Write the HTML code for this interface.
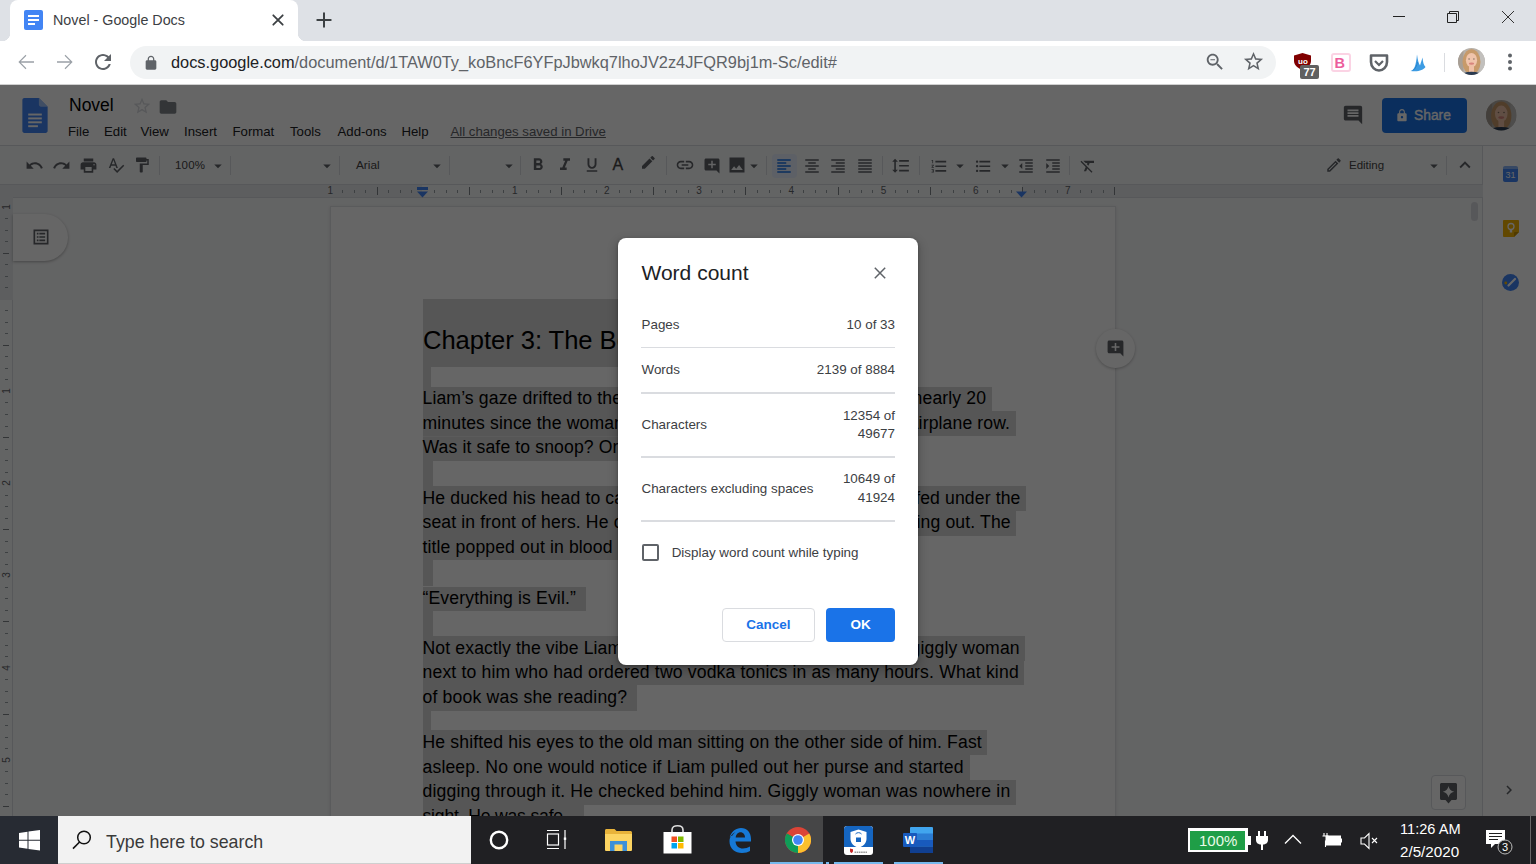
<!DOCTYPE html>
<html><head><meta charset="utf-8">
<style>
*{box-sizing:border-box}
html,body{margin:0;padding:0}
body{width:1536px;height:864px;overflow:hidden;position:relative;font-family:"Liberation Sans",sans-serif;background:#fff}
.a{position:absolute}
svg{display:block}
.t{white-space:nowrap;position:absolute;line-height:1}
</style></head><body>
<!-- ============ CHROME TAB STRIP ============ -->
<div class="a" style="left:0;top:0;width:1536px;height:41px;background:#dee1e6"></div>
<div class="a" style="left:10px;top:0;width:288px;height:41px;background:#fff;border-radius:8px 8px 0 0"></div>
<div class="a" style="left:2px;top:33px;width:8px;height:8px;background:radial-gradient(circle at 0 0,#dee1e6 8px,#fff 8.5px)"></div>
<div class="a" style="left:298px;top:33px;width:8px;height:8px;background:radial-gradient(circle at 100% 0,#dee1e6 8px,#fff 8.5px)"></div>
<!-- docs favicon -->
<div class="a" style="left:24px;top:10px;width:19px;height:20px;background:#4285f4;border-radius:2px"></div>
<div class="a" style="left:28px;top:15px;width:11px;height:2px;background:#fff"></div>
<div class="a" style="left:28px;top:19px;width:11px;height:2px;background:#fff"></div>
<div class="a" style="left:28px;top:23px;width:7px;height:2px;background:#fff"></div>
<div class="t" style="left:53px;top:13px;font-size:14.3px;color:#3c4043">Novel - Google Docs</div>
<svg class="a" style="left:271.3px;top:13px" width="14" height="14" viewBox="0 0 14 14"><path d="M2.3 2.3L11.7 11.7M11.7 2.3L2.3 11.7" stroke="#3c4043" stroke-width="1.8" stroke-linecap="round"/></svg>
<svg class="a" style="left:316px;top:12px" width="16" height="16" viewBox="0 0 16 16"><path d="M8 1.3V14.7M1.3 8H14.7" stroke="#3c4043" stroke-width="2" stroke-linecap="round"/></svg>
<!-- window controls -->
<div class="a" style="left:1393px;top:16px;width:12px;height:1px;background:#222"></div>
<svg class="a" style="left:1446px;top:10px" width="14" height="14" viewBox="0 0 14 14"><path d="M1.5 3.5H10.5V12.5H1.5Z M3.5 3.5V1.5H12.5V10.5H10.5" fill="none" stroke="#222" stroke-width="1"/></svg>
<svg class="a" style="left:1501px;top:10px" width="14" height="14" viewBox="0 0 14 14"><path d="M1 1L13 13M13 1L1 13" stroke="#333" stroke-width="1"/></svg>
<!-- ============ CHROME TOOLBAR ============ -->
<div class="a" style="left:0;top:41px;width:1536px;height:44px;background:#fff"></div>
<div class="a" style="left:0;top:84px;width:1536px;height:1px;background:#d0d0d0"></div>
<svg class="a" style="left:14px;top:49.75px" width="24" height="24" viewBox="0 0 24 24"><path fill="#9aa0a6" d="M20 11.25H6.8l5.6-5.6L11.6 4.8 4.4 12l7.2 7.2.8-.85-5.6-5.6H20z"/></svg>
<svg class="a" style="left:53px;top:49.75px" width="24" height="24" viewBox="0 0 24 24"><path fill="#9aa0a6" d="M4 11.25H17.2l-5.6-5.6.8-.85L19.6 12l-7.2 7.2-.8-.85 5.6-5.6H4z"/></svg>
<svg class="a" style="left:91px;top:50px" width="24" height="24" viewBox="0 0 24 24"><path fill="#5f6368" d="M17.65 6.35C16.2 4.9 14.21 4 12 4c-4.42 0-7.99 3.58-7.99 8s3.57 8 7.99 8c3.73 0 6.84-2.55 7.73-6h-2.08c-.82 2.33-3.04 4-5.65 4-3.31 0-6-2.69-6-6s2.69-6 6-6c1.66 0 3.14.69 4.22 1.78L13 11h7V4l-2.35 2.35z"/></svg>
<div class="a" style="left:130px;top:46px;width:1146px;height:33px;background:#f1f3f4;border-radius:17px"></div>
<svg class="a" style="left:143px;top:55px" width="16" height="16" viewBox="0 0 24 24"><path fill="#5f6368" d="M18 8h-1V6c0-2.76-2.24-5-5-5S7 3.24 7 6v2H6c-1.1 0-2 .9-2 2v10c0 1.1.9 2 2 2h12c1.1 0 2-.9 2-2V10c0-1.1-.9-2-2-2zM15.1 8H8.9V6c0-1.71 1.39-3.1 3.1-3.1 1.71 0 3.1 1.39 3.1 3.1v2z"/></svg>
<div class="t" style="left:171px;top:54px;font-size:16.35px;color:#202124">docs.google.com<span style="color:#5f6368">/document/d/1TAW0Ty_koBncF6YFpJbwkq7lhoJV2z4JFQR9bj1m-Sc/edit#</span></div>
<svg class="a" style="left:1204px;top:51px" width="22" height="22" viewBox="0 0 24 24"><path fill="#5f6368" d="M15.5 14h-.79l-.28-.27C15.41 12.59 16 11.11 16 9.5 16 5.91 13.09 3 9.5 3S3 5.91 3 9.5 5.91 16 9.5 16c1.61 0 3.09-.59 4.23-1.57l.27.28v.79l5 4.99L20.49 19l-4.99-5zm-6 0C7.01 14 5 11.99 5 9.5S7.01 5 9.5 5 14 7.01 14 9.5 11.99 14 9.5 14zM7 9h5v1H7z"/></svg>
<svg class="a" style="left:1242px;top:50px" width="23" height="23" viewBox="0 0 24 24"><path fill="#5f6368" d="M22 9.24l-7.19-.62L12 2 9.19 8.63 2 9.24l5.46 4.73L5.82 21 12 17.27 18.18 21l-1.63-7.03L22 9.24zM12 15.4l-3.76 2.27 1-4.28-3.32-2.88 4.38-.38L12 6.1l1.71 4.04 4.38.38-3.32 2.88 1 4.28L12 15.4z"/></svg>
<!-- extensions -->
<svg class="a" style="left:1293px;top:53px" width="19" height="17" viewBox="0 0 19 17"><path d="M9.5 0L18 2.5V8C18 12 14 15.5 9.5 17C5 15.5 1 12 1 8V2.5Z" fill="#800000"/><text x="5" y="11" font-size="8" fill="#fff" font-family="Liberation Sans" font-weight="bold">uo</text></svg>
<div class="a" style="left:1300px;top:65px;width:19px;height:14px;background:#616161;border-radius:2px;color:#fff;font-size:11px;font-weight:bold;line-height:14px;text-align:center">77</div>
<div class="a" style="left:1331px;top:53px;width:19.5px;height:19px;border:2.5px solid #fbd3e4;border-radius:3px;background:#fff"></div>
<div class="t" style="left:1334.5px;top:56px;font-size:14.5px;font-weight:bold;color:#ec5d9c">B</div>
<svg class="a" style="left:1369px;top:54px" width="20" height="18" viewBox="0 0 20 18"><path d="M2 1.5H18V8C18 13 14 16.5 10 16.5S2 13 2 8Z" fill="none" stroke="#5f6368" stroke-width="2.6" stroke-linejoin="round"/><path d="M6 7L10 11L14 7" fill="none" stroke="#5f6368" stroke-width="2.2"/></svg>
<svg class="a" style="left:1409.5px;top:54px" width="16" height="18" viewBox="0 0 16 18"><path d="M0.5 17C4 16.5 6 12 7 0.5C7.8 6 8.5 9 10 11.5C11 8 12 5.5 12.5 3.5C13 8 13.5 11 15.5 13C13 16 9 18 0.5 17Z" fill="#3d9ce3"/><path d="M3 16.5C6 14 7 11 7.5 8" stroke="#1f7fc9" stroke-width=".8" fill="none"/></svg>
<div class="a" style="left:1444px;top:53px;width:1px;height:19px;background:#dadce0"></div>
<svg class="a" style="left:1458.4px;top:48.4px" width="27" height="27" viewBox="0 0 30 30"><defs><clipPath id="avc"><circle cx="15" cy="15" r="15"/></clipPath></defs><g clip-path="url(#avc)"><rect width="30" height="30" fill="#b7b1aa"/><rect x="0" y="0" width="6" height="30" fill="#a89f95"/><rect x="24" y="0" width="6" height="30" fill="#c2c0bd"/><ellipse cx="15" cy="15.5" rx="10" ry="14" fill="#c79a6a"/><ellipse cx="15" cy="13.5" rx="6.2" ry="8" fill="#f0c4ab"/><rect x="12.2" y="19" width="5.6" height="8" fill="#efc0a6"/><ellipse cx="15" cy="31" rx="12" ry="4.5" fill="#2a3a50"/><ellipse cx="15" cy="17.3" rx="3" ry="1.3" fill="#d8857c"/><circle cx="12.3" cy="12.3" r=".8" fill="#7a6a5a"/><circle cx="17.7" cy="12.3" r=".8" fill="#7a6a5a"/></g></svg>
<svg class="a" style="left:1500px;top:50px" width="20" height="24" viewBox="0 0 20 24"><circle cx="10" cy="5.5" r="2" fill="#5f6368"/><circle cx="10" cy="12" r="2" fill="#5f6368"/><circle cx="10" cy="18.5" r="2" fill="#5f6368"/></svg>
<div class="a" style="left:0;top:85px;width:1536px;height:731px;background:#f8f9fa"></div>
<div class="a" style="left:0;top:85px;width:1536px;height:61px;background:#fff;border-bottom:1px solid #dadce0"></div>
<svg class="a" style="left:22px;top:98px" width="26" height="35" viewBox="0 0 26 36"><path d="M2 0H17L26 9V34C26 35 25 36 24 36H2C1 36 0 35 0 34V2C0 1 1 0 2 0Z" fill="#4285f4"/><path d="M17 0L26 9H19C18 9 17 8 17 7Z" fill="#a1c2fa"/><rect x="6" y="16" width="14" height="2" fill="#fff"/><rect x="6" y="20" width="14" height="2" fill="#fff"/><rect x="6" y="24" width="14" height="2" fill="#fff"/><rect x="6" y="28" width="10" height="2" fill="#fff"/></svg>
<div class="t" style="left:69px;top:97.3px;font-size:17.5px;color:#000">Novel</div>
<svg class="a" style="left:132px;top:96px" width="20" height="20" viewBox="0 0 24 24"><path fill="#dadce0" d="M22 9.24l-7.19-.62L12 2 9.19 8.63 2 9.24l5.46 4.73L5.82 21 12 17.27 18.18 21l-1.63-7.03L22 9.24zM12 15.4l-3.76 2.27 1-4.28-3.32-2.88 4.38-.38L12 6.1l1.71 4.04 4.38.38-3.32 2.88 1 4.28L12 15.4z"/></svg>
<svg class="a" style="left:158px;top:97px" width="20" height="20" viewBox="0 0 24 24"><path fill="#80868b" d="M10 4H4c-1.1 0-1.99.9-1.99 2L2 18c0 1.1.9 2 2 2h16c1.1 0 2-.9 2-2V8c0-1.1-.9-2-2-2h-8l-2-2z"/></svg>
<div class="t" style="left:68px;top:125px;font-size:13.2px;color:#202124">File</div>
<div class="t" style="left:104px;top:125px;font-size:13.2px;color:#202124">Edit</div>
<div class="t" style="left:140.5px;top:125px;font-size:13.2px;color:#202124">View</div>
<div class="t" style="left:184px;top:125px;font-size:13.2px;color:#202124">Insert</div>
<div class="t" style="left:232.5px;top:125px;font-size:13.2px;color:#202124">Format</div>
<div class="t" style="left:290px;top:125px;font-size:13.2px;color:#202124">Tools</div>
<div class="t" style="left:337.5px;top:125px;font-size:13.2px;color:#202124">Add-ons</div>
<div class="t" style="left:401.5px;top:125px;font-size:13.2px;color:#202124">Help</div>
<div class="t" style="left:450.5px;top:125px;font-size:13.2px;color:#5f6368;text-decoration:underline">All changes saved in Drive</div>
<svg class="a" style="left:1342px;top:104px" width="22" height="22" viewBox="0 0 24 24"><path fill="#5f6368" d="M21.99 4c0-1.1-.89-2-1.99-2H4c-1.1 0-2 .9-2 2v12c0 1.1.9 2 2 2h14l4 4-.01-18zM18 14H6v-2h12v2zm0-3H6V9h12v2zm0-3H6V6h12v2z"/></svg>
<div class="a" style="left:1382px;top:98px;width:85px;height:35px;background:#1a73e8;border-radius:4px"></div>
<svg class="a" style="left:1395px;top:108px" width="14" height="15" viewBox="0 0 24 24"><path fill="#fff" d="M18 8h-1V6c0-2.76-2.24-5-5-5S7 3.24 7 6v2H6c-1.1 0-2 .9-2 2v10c0 1.1.9 2 2 2h12c1.1 0 2-.9 2-2V10c0-1.1-.9-2-2-2zm-6 9c-1.1 0-2-.9-2-2s.9-2 2-2 2 .9 2 2-.9 2-2 2zm3.1-9H8.9V6c0-1.71 1.39-3.1 3.1-3.1 1.71 0 3.1 1.39 3.1 3.1v2z"/></svg>
<div class="t" style="left:1414px;top:109px;font-size:13.8px;color:#fff;-webkit-text-stroke:0.35px #fff">Share</div>
<svg class="a" style="left:1486.4px;top:100.2px" width="30.5" height="30.5" viewBox="0 0 30 30"><defs><clipPath id="avd"><circle cx="15" cy="15" r="15"/></clipPath></defs><g clip-path="url(#avd)"><rect width="30" height="30" fill="#b7b1aa"/><rect x="0" y="0" width="6" height="30" fill="#a89f95"/><rect x="24" y="0" width="6" height="30" fill="#c2c0bd"/><ellipse cx="15" cy="15.5" rx="10" ry="14" fill="#c79a6a"/><ellipse cx="15" cy="13.5" rx="6.2" ry="8" fill="#f0c4ab"/><rect x="12.2" y="19" width="5.6" height="8" fill="#efc0a6"/><ellipse cx="15" cy="31" rx="12" ry="4.5" fill="#2a3a50"/><ellipse cx="15" cy="17.3" rx="3" ry="1.3" fill="#d8857c"/><circle cx="12.3" cy="12.3" r=".8" fill="#7a6a5a"/><circle cx="17.7" cy="12.3" r=".8" fill="#7a6a5a"/></g></svg>
<svg class="a" style="left:24.50px;top:155.50px" width="19" height="19" viewBox="0 0 24 24"><path fill="#5f6368" d="M12.5 8c-2.65 0-5.05.99-6.9 2.6L2 7v9h9l-3.62-3.62c1.39-1.16 3.16-1.88 5.12-1.88 3.54 0 6.55 2.31 7.6 5.5l2.37-.78C21.08 11.03 17.15 8 12.5 8z"/></svg>
<svg class="a" style="left:52.10px;top:155.50px" width="19" height="19" viewBox="0 0 24 24"><path fill="#5f6368" d="M18.4 10.6C16.55 8.99 14.15 8 11.5 8c-4.65 0-8.58 3.03-9.96 7.22L3.9 16c1.05-3.19 4.050-5.5 7.6-5.5 1.95 0 3.73.72 5.12 1.88L13 16h9V7l-3.6 3.6z"/></svg>
<svg class="a" style="left:78.50px;top:155.50px" width="19" height="19" viewBox="0 0 24 24"><path fill="#5f6368" d="M19 8H5c-1.66 0-3 1.34-3 3v6h4v4h12v-4h4v-6c0-1.66-1.34-3-3-3zm-3 11H8v-5h8v5zm3-7c-.55 0-1-.45-1-1s.45-1 1-1 1 .45 1 1-.45 1-1 1zm-1-9H6v4h12V3z"/></svg>
<svg class="a" style="left:106.50px;top:156.00px" width="18" height="18" viewBox="0 0 24 24"><path fill="#5f6368" d="M12.45 16h2.09L9.43 3H7.57L2.46 16h2.09l1.12-3h5.64l1.14 3zm-6.02-5L8.5 5.48 10.57 11H6.43zm15.16.59l-8.09 8.09L9.83 16l-1.41 1.41 5.09 5.09L23 13l-1.41-1.41z"/></svg>
<svg class="a" style="left:133.00px;top:156.00px" width="18" height="18" viewBox="0 0 24 24"><path fill="#5f6368" d="M18 4V3c0-.55-.45-1-1-1H5c-.55 0-1 .45-1 1v4c0 .55.45 1 1 1h12c.55 0 1-.45 1-1V6h1v4H9v11c0 .55.45 1 1 1h2c.55 0 1-.45 1-1v-9h8V4h-3z"/></svg>
<div class="a" style="left:158.5px;top:156px;width:1px;height:19px;background:#dadce0"></div>
<div class="t" style="left:175px;top:160px;font-size:11.5px;color:#444;letter-spacing:.2px">100%</div>
<svg class="a" style="left:209.30px;top:157.00px" width="18" height="18" viewBox="0 0 24 24"><path fill="#5f6368" d="M7 10l5 5 5-5z"/></svg>
<div class="a" style="left:229.5px;top:156px;width:1px;height:19px;background:#dadce0"></div>
<svg class="a" style="left:318.00px;top:157.00px" width="18" height="18" viewBox="0 0 24 24"><path fill="#5f6368" d="M7 10l5 5 5-5z"/></svg>
<div class="a" style="left:338.5px;top:156px;width:1px;height:19px;background:#dadce0"></div>
<div class="t" style="left:356px;top:160px;font-size:11.8px;color:#444">Arial</div>
<svg class="a" style="left:427.60px;top:157.00px" width="18" height="18" viewBox="0 0 24 24"><path fill="#5f6368" d="M7 10l5 5 5-5z"/></svg>
<div class="a" style="left:448.5px;top:156px;width:1px;height:19px;background:#dadce0"></div>
<svg class="a" style="left:499.50px;top:157.00px" width="18" height="18" viewBox="0 0 24 24"><path fill="#5f6368" d="M7 10l5 5 5-5z"/></svg>
<div class="a" style="left:519.5px;top:156px;width:1px;height:19px;background:#dadce0"></div>
<svg class="a" style="left:527.50px;top:155.00px" width="20" height="20" viewBox="0 0 24 24"><path fill="#5f6368" d="M15.6 10.79c.97-.67 1.65-1.77 1.65-2.79 0-2.26-1.75-4-4-4H7v14h7.04c2.09 0 3.71-1.7 3.71-3.79 0-1.52-.86-2.82-2.15-3.42zM10 6.5h3c.83 0 1.5.67 1.5 1.5s-.67 1.5-1.5 1.5h-3v-3zm3.5 9H10v-3h3.5c.83 0 1.5.67 1.5 1.5s-.67 1.5-1.5 1.5z"/></svg>
<svg class="a" style="left:554.70px;top:155.00px" width="20" height="20" viewBox="0 0 24 24"><path fill="#5f6368" d="M10 4v3h2.21l-3.42 8H6v3h8v-3h-2.21l3.42-8H18V4z"/></svg>
<svg class="a" style="left:583.00px;top:156.00px" width="18" height="18" viewBox="0 0 24 24"><path fill="#5f6368" d="M12 17c3.31 0 6-2.69 6-6V3h-2.5v8c0 1.930-1.57 3.5-3.5 3.5S8.5 12.93 8.5 11V3H6v8c0 3.31 2.69 6 6 6zm-7 2v2h14v-2H5z"/></svg>
<div class="t" style="left:612.5px;top:157px;font-size:16px;color:#444;-webkit-text-stroke:.3px #444">A</div>
<svg class="a" style="left:639.00px;top:156.00px" width="18" height="18" viewBox="0 0 24 24"><path fill="#5f6368" d="M17.75 7L14 3.25l-10 10V17h3.75l10-10zm2.96-2.96c.39-.39.39-1.02 0-1.41L18.37.29c-.39-.39-1.02-.39-1.41 0L15 2.25 18.75 6l1.96-1.96z"/></svg>
<div class="a" style="left:665.5px;top:156px;width:1px;height:19px;background:#dadce0"></div>
<svg class="a" style="left:674.60px;top:155.00px" width="20" height="20" viewBox="0 0 24 24"><path fill="#5f6368" d="M3.9 12c0-1.71 1.39-3.1 3.1-3.1h4V7H7c-2.76 0-5 2.24-5 5s2.24 5 5 5h4v-1.9H7c-1.71 0-3.1-1.39-3.1-3.1zM8 13h8v-2H8v2zm9-6h-4v1.9h4c1.71 0 3.1 1.39 3.1 3.1s-1.39 3.1-3.1 3.1h-4V17h4c2.76 0 5-2.24 5-5s-2.24-5-5-5z"/></svg>
<svg class="a" style="left:702.70px;top:157.30px" width="18" height="18" viewBox="0 0 24 24"><path fill="#5f6368" d="M22 4c0-1.1-.9-2-2-2H4c-1.1 0-1.99.9-1.99 2L2 16c0 1.1.9 2 2 2h14l4 4-.01-18zM17 11h-4v4h-2v-4H7V9h4V5h2v4h4v2z"/></svg>
<svg class="a" style="left:727.30px;top:155.20px" width="20" height="20" viewBox="0 0 24 24"><path fill="#5f6368" d="M3 3H21V21H3ZM5 18H19L14.5 12L11 16.5L8.5 13.5Z"/></svg>
<svg class="a" style="left:744.60px;top:157.00px" width="18" height="18" viewBox="0 0 24 24"><path fill="#5f6368" d="M7 10l5 5 5-5z"/></svg>
<div class="a" style="left:765.5px;top:156px;width:1px;height:19px;background:#dadce0"></div>
<div class="a" style="left:772px;top:153.5px;width:25px;height:24.5px;background:#e8f0fe;border-radius:4px"></div>
<svg class="a" style="left:775.40px;top:157.00px" width="18" height="18" viewBox="0 0 24 24"><path fill="#1a73e8" d="M15 15H3v2h12v-2zm0-8H3v2h12V7zM3 13h18v-2H3v2zm0 8h18v-2H3v2zM3 3v2h18V3H3z"/></svg>
<svg class="a" style="left:802.50px;top:157.00px" width="18" height="18" viewBox="0 0 24 24"><path fill="#5f6368" d="M7 15v2h10v-2H7zm-4 6h18v-2H3v2zm0-8h18v-2H3v2zm4-6v2h10V7H7zM3 3v2h18V3H3z"/></svg>
<svg class="a" style="left:829.00px;top:157.00px" width="18" height="18" viewBox="0 0 24 24"><path fill="#5f6368" d="M3 21h18v-2H3v2zm6-4h12v-2H9v2zm-6-4h18v-2H3v2zm6-4h12V7H9v2zM3 3v2h18V3H3z"/></svg>
<svg class="a" style="left:855.80px;top:157.00px" width="18" height="18" viewBox="0 0 24 24"><path fill="#5f6368" d="M3 21h18v-2H3v2zm0-4h18v-2H3v2zm0-4h18v-2H3v2zm0-4h18V7H3v2zm0-6v2h18V3H3z"/></svg>
<div class="a" style="left:881.5px;top:156px;width:1px;height:19px;background:#dadce0"></div>
<svg class="a" style="left:891.25px;top:156.25px" width="19.5" height="19.5" viewBox="0 0 24 24"><path fill="#5f6368" d="M6 7h2.5L5 3.5 1.5 7H4v10H1.5L5 20.5 8.5 17H6V7zm4-2v2h12V5H10zm0 14h12v-2H10v2zm0-6h12v-2H10v2z"/></svg>
<div class="a" style="left:918.8px;top:156px;width:1px;height:19px;background:#dadce0"></div>
<svg class="a" style="left:929.75px;top:156.75px" width="18.5" height="18.5" viewBox="0 0 24 24"><path fill="#5f6368" d="M2 17h2v.5H3v1h1v.5H2v1h3v-4H2v1zm1-9h1V4H2v1h1v3zm-1 3h1.8L2 13.1v.9h3v-1H3.2L5 10.9V10H2v1zm5-6v2h14V5H7zm0 14h14v-2H7v2zm0-6h14v-2H7v2z"/></svg>
<svg class="a" style="left:950.70px;top:157.00px" width="18" height="18" viewBox="0 0 24 24"><path fill="#5f6368" d="M7 10l5 5 5-5z"/></svg>
<svg class="a" style="left:974.35px;top:156.75px" width="18.5" height="18.5" viewBox="0 0 24 24"><path fill="#5f6368" d="M4 10.5c-.83 0-1.5.67-1.5 1.5s.67 1.5 1.5 1.5 1.5-.67 1.5-1.5-.67-1.5-1.5-1.5zm0-6c-.83 0-1.5.67-1.5 1.5S3.17 7.5 4 7.5 5.5 6.830 5.5 6 4.83 4.5 4 4.5zm0 12c-.83 0-1.5.68-1.5 1.5s.68 1.5 1.5 1.5 1.5-.68 1.5-1.5-.67-1.5-1.5-1.5zM7 19h14v-2H7v2zm0-6h14v-2H7v2zm0-8v2h14V5H7z"/></svg>
<svg class="a" style="left:995.60px;top:157.00px" width="18" height="18" viewBox="0 0 24 24"><path fill="#5f6368" d="M7 10l5 5 5-5z"/></svg>
<svg class="a" style="left:1016.90px;top:157.00px" width="18" height="18" viewBox="0 0 24 24"><path fill="#5f6368" d="M11 17h10v-2H11v2zm-8-5l4 4V8l-4 4zm0 9h18v-2H3v2zM3 3v2h18V3H3zm8 6h10V7H11v2zm0 4h10v-2H11v2z"/></svg>
<svg class="a" style="left:1043.70px;top:157.00px" width="18" height="18" viewBox="0 0 24 24"><path fill="#5f6368" d="M3 21h18v-2H3v2zM3 8v8l4-4-4-4zm8 9h10v-2H11v2zM3 3v2h18V3H3zm8 6h10V7H11v2zm0 4h10v-2H11v2z"/></svg>
<div class="a" style="left:1068.8px;top:156px;width:1px;height:19px;background:#dadce0"></div>
<svg class="a" style="left:1079.40px;top:157.00px" width="18" height="18" viewBox="0 0 24 24"><path fill="#5f6368" d="M3.27 5L2 6.27l6.97 6.97L6.5 19h3l1.57-3.66L16.73 21 18 19.73 3.55 5.270 3.27 5zM6 5v.18L8.82 8h2.4l-.72 1.68 2.1 2.1L14.21 8H20V5H6z"/></svg>
<svg class="a" style="left:1325.00px;top:156.00px" width="18" height="18" viewBox="0 0 24 24"><path fill="#5f6368" d="M3 17.25V21h3.75L17.81 9.94l-3.75-3.75L3 17.25zM5.92 19H5v-.92l9.06-9.06.92.92L5.92 19zM20.71 5.63l-2.34-2.34c-.2-.2-.45-.29-.71-.29s-.51.1-.7.29l-1.83 1.83 3.75 3.75 1.83-1.830c.39-.39.39-1.02 0-1.41z"/></svg>
<div class="t" style="left:1349px;top:160px;font-size:11.5px;color:#444">Editing</div>
<svg class="a" style="left:1425.00px;top:157.00px" width="18" height="18" viewBox="0 0 24 24"><path fill="#5f6368" d="M7 10l5 5 5-5z"/></svg>
<div class="a" style="left:1446px;top:156px;width:1px;height:19px;background:#dadce0"></div>
<svg class="a" style="left:1454.00px;top:154.00px" width="22" height="22" viewBox="0 0 24 24"><path fill="#5f6368" d="M12 8l-6 6 1.41 1.41L12 10.83l4.59 4.58L18 14z"/></svg>
<div class="a" style="left:1482px;top:146px;width:54px;height:670px;background:#fff;border-left:1px solid #dadce0"></div>
<div class="a" style="left:1503px;top:166px;width:15px;height:16px;background:#4285f4;border-radius:2px;border-top:3px solid #8ab4f8;color:#fff;font-size:9px;line-height:13px;text-align:center">31</div>
<svg class="a" style="left:1503px;top:220px" width="16" height="17" viewBox="0 0 16 17"><path d="M1 0H15C15.5 0 16 .5 16 1V12L11 17H1C.5 17 0 16.5 0 16V1C0 .5.5 0 1 0Z" fill="#f6b400"/><path d="M11 17V13C11 12.5 11.5 12 12 12H16Z" fill="#c58f00"/><circle cx="8" cy="6.5" r="3" fill="none" stroke="#fff" stroke-width="1.3"/><rect x="6.8" y="9.5" width="2.4" height="3" fill="#fff"/></svg>
<div class="a" style="left:1502px;top:274px;width:17px;height:17px;background:#4285f4;border-radius:50%"></div>
<svg class="a" style="left:1502px;top:274px" width="17" height="17" viewBox="0 0 17 17"><path d="M6.5 11.5L13 5" stroke="#fff" stroke-width="2.2" stroke-linecap="round"/><circle cx="3.8" cy="9" r="1.4" fill="#fbbc04"/></svg>
<svg class="a" style="left:1499.50px;top:781.00px" width="18" height="18" viewBox="0 0 24 24"><path fill="#5f6368" d="M10 6L8.59 7.41 13.17 12l-4.58 4.59L10 18l6-6z"/></svg>
<div class="a" style="left:1430.5px;top:774.5px;width:35.5px;height:35.5px;background:#fff;border-radius:4px;border:1px solid #dadce0"></div>
<svg class="a" style="left:1440px;top:782.5px" width="17" height="21" viewBox="0 0 17 21"><path d="M1.5 0H15.5C16.3 0 17 .7 17 1.5V15.5C17 16.3 16.3 17 15.5 17H11.5L8.5 20.5L5.5 17H1.5C.7 17 0 16.3 0 15.5V1.5C0 .7.7 0 1.5 0Z" fill="#5f6368"/><path d="M8.5 3Q9.3 7.7 14.2 8.7Q9.3 9.7 8.5 14.5Q7.7 9.7 2.8 8.7Q7.7 7.7 8.5 3Z" fill="#fff"/></svg>
<div class="a" style="left:0;top:184px;width:1483px;height:13px;background:#e8eaed"></div>
<div class="a" style="left:422px;top:184px;width:600px;height:13px;background:#f8f9fa"></div>
<div class="a" style="left:0;top:197px;width:1483px;height:1px;background:#dadce0"></div>
<div class="a" style="left:0;top:184px;width:1483px;height:1px;background:#dadce0"></div>
<div class="a" style="left:342.0px;top:190px;width:1px;height:3px;background:#9aa0a6"></div>
<div class="a" style="left:353.6px;top:190px;width:1px;height:3px;background:#9aa0a6"></div>
<div class="a" style="left:365.1px;top:190px;width:1px;height:3px;background:#9aa0a6"></div>
<div class="a" style="left:376.6px;top:187px;width:1px;height:8px;background:#80868b"></div>
<div class="a" style="left:388.1px;top:190px;width:1px;height:3px;background:#9aa0a6"></div>
<div class="a" style="left:399.6px;top:190px;width:1px;height:3px;background:#9aa0a6"></div>
<div class="a" style="left:411.2px;top:190px;width:1px;height:3px;background:#9aa0a6"></div>
<div class="a" style="left:434.2px;top:190px;width:1px;height:3px;background:#9aa0a6"></div>
<div class="a" style="left:445.8px;top:190px;width:1px;height:3px;background:#9aa0a6"></div>
<div class="a" style="left:457.3px;top:190px;width:1px;height:3px;background:#9aa0a6"></div>
<div class="a" style="left:468.8px;top:187px;width:1px;height:8px;background:#80868b"></div>
<div class="a" style="left:480.3px;top:190px;width:1px;height:3px;background:#9aa0a6"></div>
<div class="a" style="left:491.9px;top:190px;width:1px;height:3px;background:#9aa0a6"></div>
<div class="a" style="left:503.4px;top:190px;width:1px;height:3px;background:#9aa0a6"></div>
<div class="a" style="left:526.4px;top:190px;width:1px;height:3px;background:#9aa0a6"></div>
<div class="a" style="left:538.0px;top:190px;width:1px;height:3px;background:#9aa0a6"></div>
<div class="a" style="left:549.5px;top:190px;width:1px;height:3px;background:#9aa0a6"></div>
<div class="a" style="left:561.0px;top:187px;width:1px;height:8px;background:#80868b"></div>
<div class="a" style="left:572.5px;top:190px;width:1px;height:3px;background:#9aa0a6"></div>
<div class="a" style="left:584.0px;top:190px;width:1px;height:3px;background:#9aa0a6"></div>
<div class="a" style="left:595.6px;top:190px;width:1px;height:3px;background:#9aa0a6"></div>
<div class="a" style="left:618.6px;top:190px;width:1px;height:3px;background:#9aa0a6"></div>
<div class="a" style="left:630.2px;top:190px;width:1px;height:3px;background:#9aa0a6"></div>
<div class="a" style="left:641.7px;top:190px;width:1px;height:3px;background:#9aa0a6"></div>
<div class="a" style="left:653.2px;top:187px;width:1px;height:8px;background:#80868b"></div>
<div class="a" style="left:664.7px;top:190px;width:1px;height:3px;background:#9aa0a6"></div>
<div class="a" style="left:676.2px;top:190px;width:1px;height:3px;background:#9aa0a6"></div>
<div class="a" style="left:687.8px;top:190px;width:1px;height:3px;background:#9aa0a6"></div>
<div class="a" style="left:710.8px;top:190px;width:1px;height:3px;background:#9aa0a6"></div>
<div class="a" style="left:722.4px;top:190px;width:1px;height:3px;background:#9aa0a6"></div>
<div class="a" style="left:733.9px;top:190px;width:1px;height:3px;background:#9aa0a6"></div>
<div class="a" style="left:745.4px;top:187px;width:1px;height:8px;background:#80868b"></div>
<div class="a" style="left:756.9px;top:190px;width:1px;height:3px;background:#9aa0a6"></div>
<div class="a" style="left:768.5px;top:190px;width:1px;height:3px;background:#9aa0a6"></div>
<div class="a" style="left:780.0px;top:190px;width:1px;height:3px;background:#9aa0a6"></div>
<div class="a" style="left:803.0px;top:190px;width:1px;height:3px;background:#9aa0a6"></div>
<div class="a" style="left:814.5px;top:190px;width:1px;height:3px;background:#9aa0a6"></div>
<div class="a" style="left:826.1px;top:190px;width:1px;height:3px;background:#9aa0a6"></div>
<div class="a" style="left:837.6px;top:187px;width:1px;height:8px;background:#80868b"></div>
<div class="a" style="left:849.1px;top:190px;width:1px;height:3px;background:#9aa0a6"></div>
<div class="a" style="left:860.6px;top:190px;width:1px;height:3px;background:#9aa0a6"></div>
<div class="a" style="left:872.2px;top:190px;width:1px;height:3px;background:#9aa0a6"></div>
<div class="a" style="left:895.2px;top:190px;width:1px;height:3px;background:#9aa0a6"></div>
<div class="a" style="left:906.8px;top:190px;width:1px;height:3px;background:#9aa0a6"></div>
<div class="a" style="left:918.3px;top:190px;width:1px;height:3px;background:#9aa0a6"></div>
<div class="a" style="left:929.8px;top:187px;width:1px;height:8px;background:#80868b"></div>
<div class="a" style="left:941.3px;top:190px;width:1px;height:3px;background:#9aa0a6"></div>
<div class="a" style="left:952.9px;top:190px;width:1px;height:3px;background:#9aa0a6"></div>
<div class="a" style="left:964.4px;top:190px;width:1px;height:3px;background:#9aa0a6"></div>
<div class="a" style="left:987.4px;top:190px;width:1px;height:3px;background:#9aa0a6"></div>
<div class="a" style="left:999.0px;top:190px;width:1px;height:3px;background:#9aa0a6"></div>
<div class="a" style="left:1010.5px;top:190px;width:1px;height:3px;background:#9aa0a6"></div>
<div class="a" style="left:1022.0px;top:187px;width:1px;height:8px;background:#80868b"></div>
<div class="a" style="left:1033.5px;top:190px;width:1px;height:3px;background:#9aa0a6"></div>
<div class="a" style="left:1045.1px;top:190px;width:1px;height:3px;background:#9aa0a6"></div>
<div class="a" style="left:1056.6px;top:190px;width:1px;height:3px;background:#9aa0a6"></div>
<div class="a" style="left:1079.6px;top:190px;width:1px;height:3px;background:#9aa0a6"></div>
<div class="a" style="left:1091.2px;top:190px;width:1px;height:3px;background:#9aa0a6"></div>
<div class="a" style="left:1102.7px;top:190px;width:1px;height:3px;background:#9aa0a6"></div>
<div class="a" style="left:1114.2px;top:187px;width:1px;height:8px;background:#80868b"></div>
<div class="t" style="left:327.5px;top:186px;font-size:10px;color:#5f6368">1</div>
<div class="t" style="left:511.9px;top:186px;font-size:10px;color:#5f6368">1</div>
<div class="t" style="left:604.1px;top:186px;font-size:10px;color:#5f6368">2</div>
<div class="t" style="left:696.3px;top:186px;font-size:10px;color:#5f6368">3</div>
<div class="t" style="left:788.5px;top:186px;font-size:10px;color:#5f6368">4</div>
<div class="t" style="left:880.7px;top:186px;font-size:10px;color:#5f6368">5</div>
<div class="t" style="left:972.9px;top:186px;font-size:10px;color:#5f6368">6</div>
<div class="t" style="left:1065.1px;top:186px;font-size:10px;color:#5f6368">7</div>
<svg class="a" style="left:417px;top:186px" width="11" height="12" viewBox="0 0 11 12"><rect x="0" y="1" width="11" height="3" fill="#4285f4"/><path d="M0 5.5H11L5.5 11.5Z" fill="#4285f4"/></svg>
<svg class="a" style="left:1016px;top:190px" width="11" height="8" viewBox="0 0 11 8"><path d="M0 1.5H11L5.5 7.5Z" fill="#4285f4"/></svg>
<div class="a" style="left:0;top:197px;width:13px;height:619px;background:#f8f9fa;border-right:1px solid #dadce0"></div>
<div class="a" style="left:0;top:197px;width:13px;height:103px;background:#e8eaed"></div>
<div class="t" style="left:4px;top:201.5px;font-size:10px;color:#5f6368;transform:rotate(-90deg)">1</div>
<div class="a" style="left:5px;top:218.0px;width:3px;height:1px;background:#9aa0a6"></div>
<div class="a" style="left:5px;top:229.6px;width:3px;height:1px;background:#9aa0a6"></div>
<div class="a" style="left:5px;top:241.1px;width:3px;height:1px;background:#9aa0a6"></div>
<div class="a" style="left:3px;top:252.6px;width:6px;height:1px;background:#80868b"></div>
<div class="a" style="left:5px;top:264.1px;width:3px;height:1px;background:#9aa0a6"></div>
<div class="a" style="left:5px;top:275.6px;width:3px;height:1px;background:#9aa0a6"></div>
<div class="a" style="left:5px;top:287.2px;width:3px;height:1px;background:#9aa0a6"></div>
<div class="a" style="left:5px;top:310.2px;width:3px;height:1px;background:#9aa0a6"></div>
<div class="a" style="left:5px;top:321.8px;width:3px;height:1px;background:#9aa0a6"></div>
<div class="a" style="left:5px;top:333.3px;width:3px;height:1px;background:#9aa0a6"></div>
<div class="a" style="left:3px;top:344.8px;width:6px;height:1px;background:#80868b"></div>
<div class="a" style="left:5px;top:356.3px;width:3px;height:1px;background:#9aa0a6"></div>
<div class="a" style="left:5px;top:367.9px;width:3px;height:1px;background:#9aa0a6"></div>
<div class="a" style="left:5px;top:379.4px;width:3px;height:1px;background:#9aa0a6"></div>
<div class="t" style="left:4px;top:385.9px;font-size:10px;color:#5f6368;transform:rotate(-90deg)">1</div>
<div class="a" style="left:5px;top:402.4px;width:3px;height:1px;background:#9aa0a6"></div>
<div class="a" style="left:5px;top:414.0px;width:3px;height:1px;background:#9aa0a6"></div>
<div class="a" style="left:5px;top:425.5px;width:3px;height:1px;background:#9aa0a6"></div>
<div class="a" style="left:3px;top:437.0px;width:6px;height:1px;background:#80868b"></div>
<div class="a" style="left:5px;top:448.5px;width:3px;height:1px;background:#9aa0a6"></div>
<div class="a" style="left:5px;top:460.1px;width:3px;height:1px;background:#9aa0a6"></div>
<div class="a" style="left:5px;top:471.6px;width:3px;height:1px;background:#9aa0a6"></div>
<div class="t" style="left:4px;top:478.1px;font-size:10px;color:#5f6368;transform:rotate(-90deg)">2</div>
<div class="a" style="left:5px;top:494.6px;width:3px;height:1px;background:#9aa0a6"></div>
<div class="a" style="left:5px;top:506.2px;width:3px;height:1px;background:#9aa0a6"></div>
<div class="a" style="left:5px;top:517.7px;width:3px;height:1px;background:#9aa0a6"></div>
<div class="a" style="left:3px;top:529.2px;width:6px;height:1px;background:#80868b"></div>
<div class="a" style="left:5px;top:540.7px;width:3px;height:1px;background:#9aa0a6"></div>
<div class="a" style="left:5px;top:552.2px;width:3px;height:1px;background:#9aa0a6"></div>
<div class="a" style="left:5px;top:563.8px;width:3px;height:1px;background:#9aa0a6"></div>
<div class="t" style="left:4px;top:570.3px;font-size:10px;color:#5f6368;transform:rotate(-90deg)">3</div>
<div class="a" style="left:5px;top:586.8px;width:3px;height:1px;background:#9aa0a6"></div>
<div class="a" style="left:5px;top:598.4px;width:3px;height:1px;background:#9aa0a6"></div>
<div class="a" style="left:5px;top:609.9px;width:3px;height:1px;background:#9aa0a6"></div>
<div class="a" style="left:3px;top:621.4px;width:6px;height:1px;background:#80868b"></div>
<div class="a" style="left:5px;top:632.9px;width:3px;height:1px;background:#9aa0a6"></div>
<div class="a" style="left:5px;top:644.5px;width:3px;height:1px;background:#9aa0a6"></div>
<div class="a" style="left:5px;top:656.0px;width:3px;height:1px;background:#9aa0a6"></div>
<div class="t" style="left:4px;top:662.5px;font-size:10px;color:#5f6368;transform:rotate(-90deg)">4</div>
<div class="a" style="left:5px;top:679.0px;width:3px;height:1px;background:#9aa0a6"></div>
<div class="a" style="left:5px;top:690.5px;width:3px;height:1px;background:#9aa0a6"></div>
<div class="a" style="left:5px;top:702.1px;width:3px;height:1px;background:#9aa0a6"></div>
<div class="a" style="left:3px;top:713.6px;width:6px;height:1px;background:#80868b"></div>
<div class="a" style="left:5px;top:725.1px;width:3px;height:1px;background:#9aa0a6"></div>
<div class="a" style="left:5px;top:736.6px;width:3px;height:1px;background:#9aa0a6"></div>
<div class="a" style="left:5px;top:748.2px;width:3px;height:1px;background:#9aa0a6"></div>
<div class="t" style="left:4px;top:754.7px;font-size:10px;color:#5f6368;transform:rotate(-90deg)">5</div>
<div class="a" style="left:5px;top:771.2px;width:3px;height:1px;background:#9aa0a6"></div>
<div class="a" style="left:5px;top:782.8px;width:3px;height:1px;background:#9aa0a6"></div>
<div class="a" style="left:5px;top:794.3px;width:3px;height:1px;background:#9aa0a6"></div>
<div class="a" style="left:3px;top:805.8px;width:6px;height:1px;background:#80868b"></div>
<div class="a" style="left:13px;top:214px;width:55px;height:47px;background:#fff;border-radius:0 23.5px 23.5px 0;box-shadow:0 1px 3px rgba(0,0,0,.3)"></div>
<svg class="a" style="left:31.00px;top:227.00px" width="20" height="20" viewBox="0 0 24 24"><path fill="#5f6368" d="M3 3H21V21H3ZM5 5V19H19V5ZM7 7H9V9H7ZM10 7H17V9H10ZM7 11H9V13H7ZM10 11H17V13H10ZM7 15H9V17H7ZM10 15H17V17H10Z"/></svg>
<div class="a" style="left:1471px;top:202px;width:7px;height:18.5px;background:#dadce0;border-radius:3.5px"></div>
<div class="a" style="left:330.5px;top:207px;width:784px;height:640px;background:#fff;box-shadow:0 0 0 1px #e2e3e5, 0 1px 3px 1px rgba(60,64,67,.15)"></div>
<div class="a" style="left:1096px;top:328.5px;width:39px;height:39px;border-radius:50%;background:#fff;box-shadow:0 1px 3px rgba(0,0,0,.25)"></div>
<svg class="a" style="left:1106px;top:338.5px" width="19" height="19" viewBox="0 0 24 24"><path fill="#5f6368" d="M22 4c0-1.1-.9-2-2-2H4c-1.1 0-1.99.9-1.99 2L2 16c0 1.1.9 2 2 2h14l4 4-.01-18zM17 11h-4v4h-2v-4H7V9h4V5h2v4h4v2z"/></svg>
<div class="a" style="left:423px;top:299px;width:477.0px;height:67.7px;background:#d6d6d6"></div>
<div class="t" style="left:423px;top:328.33px;font-size:25.6px;color:#000;letter-spacing:-.05px">Chapter 3: The Book</div>
<div class="a" style="left:423px;top:366.7px;width:8.0px;height:20.0px;background:#d6d6d6"></div>
<div class="a" style="left:423px;top:386.7px;width:569.0px;height:24.5px;background:#d6d6d6"></div>
<div class="a" style="left:423px;top:411.2px;width:592.7px;height:24.6px;background:#d6d6d6"></div>
<div class="a" style="left:423px;top:435.8px;width:477.0px;height:25.4px;background:#d6d6d6"></div>
<div class="a" style="left:423px;top:435.5px;width:477px;height:1px;background:#e4e4e4"></div>
<div class="t" style="left:422.5px;top:390.30px;width:377.5px;overflow:hidden;font-size:17.6px;letter-spacing:0.130px;color:#000">Liam’s gaze drifted to the paperback on the tray table. It had been</div>
<div class="t" style="right:549.87px;top:390.30px;font-size:17.6px;letter-spacing:0.13px;color:#000;text-align:right">been nearly 20</div>
<div class="t" style="left:422.5px;top:414.80px;width:377.5px;overflow:hidden;font-size:17.6px;letter-spacing:0.130px;color:#000">minutes since the woman had stepped out of the</div>
<div class="t" style="right:525.87px;top:414.80px;font-size:17.6px;letter-spacing:0.13px;color:#000;text-align:right">the airplane row.</div>
<div class="t" style="left:422.5px;top:439.40px;font-size:17.6px;letter-spacing:0.130px;color:#000">Was it safe to snoop? Or would she come back any second?</div>
<div class="a" style="left:423px;top:461.25px;width:9.8px;height:25.0px;background:#d6d6d6"></div>
<div class="a" style="left:423px;top:486.25px;width:602.5px;height:24.4px;background:#d6d6d6"></div>
<div class="a" style="left:423px;top:510.7px;width:592.7px;height:25.0px;background:#d6d6d6"></div>
<div class="a" style="left:423px;top:535.7px;width:477.0px;height:24.4px;background:#d6d6d6"></div>
<div class="t" style="left:422.5px;top:489.85px;width:377.5px;overflow:hidden;font-size:17.6px;letter-spacing:0.130px;color:#000">He ducked his head to catch a glimpse of the book stuffed under the</div>
<div class="t" style="right:515.47px;top:489.85px;font-size:17.6px;letter-spacing:0.13px;color:#000;text-align:right">stuffed under the</div>
<div class="t" style="left:422.5px;top:514.30px;width:377.5px;overflow:hidden;font-size:17.6px;letter-spacing:0.130px;color:#000">seat in front of hers. He could see the cover peeking out. The</div>
<div class="t" style="right:525.27px;top:514.30px;font-size:17.6px;letter-spacing:0.13px;color:#000;text-align:right">peeking out. The</div>
<div class="t" style="left:422.5px;top:539.30px;font-size:17.6px;letter-spacing:0.130px;color:#000">title popped out in blood red letters across the black spine.</div>
<div class="a" style="left:423px;top:560.1px;width:9.8px;height:26.4px;background:#d6d6d6"></div>
<div class="a" style="left:423px;top:586.5px;width:163.3px;height:24.2px;background:#d6d6d6"></div>
<div class="t" style="left:422.5px;top:590.10px;font-size:17.6px;letter-spacing:0.139px;color:#000">“Everything is Evil.”</div>
<div class="a" style="left:423px;top:610.7px;width:9.8px;height:25.5px;background:#d6d6d6"></div>
<div class="a" style="left:423px;top:636.2px;width:602.2px;height:24.4px;background:#d6d6d6"></div>
<div class="a" style="left:423px;top:660.6px;width:601.0px;height:24.7px;background:#d6d6d6"></div>
<div class="a" style="left:423px;top:685.3px;width:214.3px;height:25.5px;background:#d6d6d6"></div>
<div class="t" style="left:422.5px;top:639.80px;width:377.5px;overflow:hidden;font-size:17.6px;letter-spacing:0.130px;color:#000">Not exactly the vibe Liam would have expected from the giggly woman</div>
<div class="t" style="right:516.27px;top:639.80px;font-size:17.6px;letter-spacing:0.13px;color:#000;text-align:right">the giggly woman</div>
<div class="t" style="left:422.5px;top:664.20px;font-size:17.6px;letter-spacing:0.160px;color:#000">next to him who had ordered two vodka tonics in as many hours. What kind</div>
<div class="t" style="left:422.5px;top:688.90px;font-size:17.6px;letter-spacing:0.179px;color:#000">of book was she reading?</div>
<div class="a" style="left:423px;top:710.8px;width:7.8px;height:19.1px;background:#d6d6d6"></div>
<div class="a" style="left:423px;top:729.9px;width:564.0px;height:25.0px;background:#d6d6d6"></div>
<div class="a" style="left:423px;top:754.9px;width:546.7px;height:24.7px;background:#d6d6d6"></div>
<div class="a" style="left:423px;top:779.6px;width:592.5px;height:25.0px;background:#d6d6d6"></div>
<div class="a" style="left:423px;top:804.6px;width:161.4px;height:24.9px;background:#d6d6d6"></div>
<div class="t" style="left:422.5px;top:733.50px;font-size:17.6px;letter-spacing:0.147px;color:#000">He shifted his eyes to the old man sitting on the other side of him. Fast</div>
<div class="t" style="left:422.5px;top:758.50px;font-size:17.6px;letter-spacing:0.147px;color:#000">asleep. No one would notice if Liam pulled out her purse and started</div>
<div class="t" style="left:422.5px;top:783.20px;font-size:17.6px;letter-spacing:0.155px;color:#000">digging through it. He checked behind him. Giggly woman was nowhere in</div>
<div class="t" style="left:422.5px;top:808.20px;font-size:17.6px;letter-spacing:-0.183px;color:#000">sight. He was safe.</div>
<div class="a" style="left:0;top:85px;width:1536px;height:731px;background:rgba(0,0,0,.6)"></div>
<div class="a" style="left:617.5px;top:237.5px;width:300.5px;height:427.7px;background:#fff;border-radius:8px;box-shadow:0 4px 8px 3px rgba(0,0,0,.15),0 1px 3px rgba(0,0,0,.3)"></div>
<div class="t" style="left:641.5px;top:262.02px;font-size:21px;color:#202124;">Word count</div>
<svg class="a" style="left:873px;top:266px" width="14" height="14" viewBox="0 0 14 14"><path d="M1.8 1.8L12.2 12.2M12.2 1.8L1.8 12.2" stroke="#5f6368" stroke-width="1.5"/></svg>
<div class="t" style="left:641.5px;top:317.56px;font-size:13.4px;color:#3c4043;">Pages</div>
<div class="t" style="right:641.00px;top:317.56px;font-size:13.4px;color:#3c4043;text-align:right;">10 of 33</div>
<div class="a" style="left:641px;top:346.5px;width:254px;height:1.5px;background:#dadce0"></div>
<div class="t" style="left:641.5px;top:363.06px;font-size:13.4px;color:#3c4043;">Words</div>
<div class="t" style="right:641.00px;top:363.06px;font-size:13.4px;color:#3c4043;text-align:right;">2139 of 8884</div>
<div class="a" style="left:641px;top:392.0px;width:254px;height:1.5px;background:#dadce0"></div>
<div class="t" style="left:641.5px;top:417.66px;font-size:13.4px;color:#3c4043;">Characters</div>
<div class="t" style="right:641.00px;top:408.86px;font-size:13.4px;color:#3c4043;text-align:right;">12354 of</div>
<div class="t" style="right:641.00px;top:426.96px;font-size:13.4px;color:#3c4043;text-align:right;">49677</div>
<div class="a" style="left:641px;top:456.4px;width:254px;height:1.5px;background:#dadce0"></div>
<div class="t" style="left:641.5px;top:481.76px;font-size:13.4px;color:#3c4043;">Characters excluding spaces</div>
<div class="t" style="right:641.00px;top:472.41px;font-size:13.4px;color:#3c4043;text-align:right;">10649 of</div>
<div class="t" style="right:641.00px;top:491.16px;font-size:13.4px;color:#3c4043;text-align:right;">41924</div>
<div class="a" style="left:641px;top:520.3px;width:254px;height:1.5px;background:#dadce0"></div>
<div class="a" style="left:641.5px;top:543.5px;width:17.5px;height:17px;border:2px solid #5f6368;border-radius:2px"></div>
<div class="t" style="left:671.7px;top:546.36px;font-size:13.4px;color:#3c4043;">Display word count while typing</div>
<div class="a" style="left:721.5px;top:608.2px;width:93px;height:34px;border:1px solid #dadce0;border-radius:4px;background:#fff"></div>
<div class="t" style="left:746.3px;top:618.27px;font-size:13.5px;color:#1a73e8;font-weight:bold">Cancel</div>
<div class="a" style="left:826.4px;top:608.2px;width:68.7px;height:34px;border-radius:4px;background:#1a73e8"></div>
<div class="t" style="left:850.4px;top:618.27px;font-size:13.5px;color:#fff;font-weight:bold">OK</div>
<div class="a" style="left:0;top:816px;width:1536px;height:48px;background:#202023"></div>
<div class="a" style="left:0;top:816px;width:58px;height:48px;background:#272b33"></div>
<svg class="a" style="left:19px;top:830px" width="21" height="21" viewBox="0 0 21 21"><path d="M0 3L8.5 1.8V9.8H0Z M9.5 1.6L21 0V9.8H9.5Z M0 10.8H8.5V18.8L0 17.6Z M9.5 10.8H21V20.6L9.5 19Z" fill="#fff"/></svg>
<div class="a" style="left:58px;top:816px;width:413px;height:48px;background:#f2f2f2;border-bottom:1px solid #cfcfcf"></div>
<svg class="a" style="left:71px;top:829px" width="22" height="22" viewBox="0 0 22 22"><circle cx="13" cy="8.5" r="6.3" fill="none" stroke="#111" stroke-width="1.5"/><path d="M8.6 13L2 19.6" stroke="#111" stroke-width="1.6"/></svg>
<div class="t" style="left:106px;top:833.93px;font-size:17.8px;color:#3a3a3a;">Type here to search</div>
<svg class="a" style="left:489px;top:830px" width="20" height="20" viewBox="0 0 20 20"><circle cx="10" cy="10" r="8.2" fill="none" stroke="#fff" stroke-width="2.4"/></svg>
<svg class="a" style="left:546px;top:829px" width="21" height="21" viewBox="0 0 21 21"><path d="M1 1.5H13M1 19.5H13" stroke="#fff" stroke-width="1.2" fill="none"/><rect x="1.5" y="5" width="11" height="11" fill="none" stroke="#fff" stroke-width="1.2"/><path d="M19 1V20" stroke="#fff" stroke-width="1.2"/><rect x="17.8" y="8.5" width="2.4" height="2.4" fill="#fff"/></svg>
<svg class="a" style="left:605px;top:829px" width="27" height="22" viewBox="0 0 27 22"><path d="M0 1.5C0 .7.6 0 1.4 0H9.5L11.5 2H25.5C26.3 2 27 2.7 27 3.5V20.5C27 21.3 26.3 22 25.5 22H1.5C.7 22 0 21.3 0 20.5Z" fill="#e8b33a"/><path d="M0 5H27V20.5C27 21.3 26.3 22 25.5 22H1.5C.7 22 0 21.3 0 20.5Z" fill="#fcd462"/><path d="M5 22V12H22V22H17.5V15.5H9.5V22Z" fill="#3c90d9"/></svg>
<svg class="a" style="left:663px;top:825px" width="29" height="29" viewBox="0 0 29 29"><path d="M9 7V5C9 2 11.5 0.8 14.5 0.8S20 2 20 5V7" fill="none" stroke="#ddd" stroke-width="1.6"/><rect x="0.5" y="7" width="28" height="21.5" fill="#fff"/><rect x="8.5" y="11.5" width="5.5" height="5.5" fill="#f25022"/><rect x="15" y="11.5" width="5.5" height="5.5" fill="#7fba00"/><rect x="8.5" y="18" width="5.5" height="5.5" fill="#00a4ef"/><rect x="15" y="18" width="5.5" height="5.5" fill="#ffb900"/></svg>
<svg class="a" style="left:726px;top:827px" width="26" height="26" viewBox="0 0 26 26"><path d="M3.5 11C5 4.5 10 1 15 1C21 1 25 5.5 25 12V14.5H9.5C9.8 19 13 21.5 17 21.5C19.5 21.5 22 20.8 24 19.5V24C22 25.2 19.5 26 16 26C9 26 3.5 21.5 3.5 14.5C3.5 10 6 6.5 9.5 5C7 7 6 9 6 9C3.5 9 3.5 11 3.5 11Z M9.7 10.5H19C19 7.5 17 5.3 14.5 5.3C12 5.3 10 7.5 9.7 10.5Z" fill="#1679d6" fill-rule="evenodd"/></svg>
<div class="a" style="left:770px;top:816px;width:53px;height:48px;background:#464647"></div>
<div class="a" style="left:770px;top:861.5px;width:53px;height:2.5px;background:#76b9ed"></div>
<div class="a" style="left:826px;top:861.5px;width:3px;height:2.5px;background:#76b9ed"></div>
<svg class="a" style="left:785px;top:826.8px" width="26" height="26" viewBox="-13 -13 26 26"><circle r="13" fill="#db4437"/><path d="M0 0L-11.26 -6.5A13 13 0 0 0 0 13Z" fill="#0f9d58"/><path d="M0 0L0 13A13 13 0 0 0 11.26 -6.5Z" fill="#fbc02d"/><path d="M-11.26 -6.5L-5.6 3.3 0 0Z" fill="#0f9d58"/><path d="M0 13L5.6 3.3 0 0Z" fill="#fbc02d"/><circle r="6" fill="#fff"/><circle r="4.8" fill="#4285f4"/></svg>
<div class="a" style="left:834px;top:861.5px;width:49px;height:2.5px;background:#76b9ed"></div>
<svg class="a" style="left:844px;top:826px" width="29" height="29" viewBox="0 0 29 29"><rect x="0" y="0" width="29" height="29" rx="3" fill="#fff"/><path d="M0 3C0 1.3 1.3 0 3 0H26C27.7 0 29 1.3 29 3V21H0Z" fill="#1565c0"/><path d="M14.5 3.5L22.5 6V13C22.5 17.5 18.5 20.5 14.5 22C10.5 20.5 6.5 17.5 6.5 13V6Z" fill="#fff"/><rect x="12" y="11.5" width="5" height="4.5" fill="#1565c0"/><path d="M11.5 8A4 4 0 0 1 17.5 8" fill="none" stroke="#1565c0" stroke-width="1"/><path d="M6 22.5L9 23.3V25C9 26 8 26.8 7.5 27C7 26.8 6 26 6 25Z" fill="#c62828"/><path d="M10.5 26.3H23" stroke="#9a9a9a" stroke-width="1.6" stroke-dasharray="1.6 .6"/></svg>
<div class="a" style="left:894px;top:861.5px;width:49px;height:2.5px;background:#76b9ed"></div>
<svg class="a" style="left:903px;top:827px" width="30" height="26" viewBox="0 0 30 26"><rect x="7" y="0" width="23" height="26" rx="1" fill="#41a5ee"/><rect x="7" y="6.5" width="23" height="6.5" fill="#2b7cd3"/><rect x="7" y="13" width="23" height="6.5" fill="#185abd"/><rect x="7" y="19.5" width="23" height="6.5" fill="#103f91"/><rect x="0" y="6" width="14" height="14" rx="1" fill="#185abd"/><text x="7" y="17" font-size="11" font-weight="bold" fill="#fff" text-anchor="middle" font-family="Liberation Sans">W</text></svg>
<div class="a" style="left:1188px;top:828.4px;width:60px;height:23.4px;background:#fff"></div>
<div class="a" style="left:1190.4px;top:830.6px;width:54.5px;height:19px;background:#1f9e47"></div>
<div class="a" style="left:1248px;top:836px;width:2.5px;height:9px;background:#fff"></div>
<div class="t" style="left:1199px;top:833.30px;font-size:15px;color:#eafbe8;">100%</div>
<svg class="a" style="left:1255px;top:831px" width="14" height="19" viewBox="0 0 14 19"><rect x="3" y="0" width="2" height="5" fill="#fff"/><rect x="9" y="0" width="2" height="5" fill="#fff"/><path d="M1 5H13V9C13 12 10.5 13.5 8 13.5V19H6V13.5C3.5 13.5 1 12 1 9Z" fill="#fff"/></svg>
<svg class="a" style="left:1284px;top:833px" width="18" height="12" viewBox="0 0 18 12"><path d="M1 10.5L9 2.5L17 10.5" fill="none" stroke="#fff" stroke-width="1.3"/></svg>
<svg class="a" style="left:1321px;top:832px" width="21" height="16" viewBox="0 0 21 16"><rect x="5" y="4" width="14.5" height="9" fill="#fff" stroke="#fff" stroke-width="1"/><rect x="19.5" y="6.5" width="1.5" height="4" fill="#fff"/><path d="M3 1V4M6 1V4M1.5 4H7V6.5C7 8 5.5 9 4.5 9V15" fill="none" stroke="#fff" stroke-width="1.1"/></svg>
<svg class="a" style="left:1360px;top:832px" width="19" height="18" viewBox="0 0 19 18"><path d="M1 6H4.5L9 1.5V16.5L4.5 12H1Z" fill="none" stroke="#fff" stroke-width="1.1"/><path d="M12 6L17 11M17 6L12 11" stroke="#fff" stroke-width="1.1"/></svg>
<div class="t" style="left:1400px;top:822.14px;font-size:14.6px;color:#fff;">11:26 AM</div>
<div class="t" style="left:1400px;top:843.63px;font-size:15.2px;color:#fff;">2/5/2020</div>
<svg class="a" style="left:1484px;top:829px" width="34" height="26" viewBox="0 0 34 26"><path d="M2 1H21V15H11L7 19V15H2Z" fill="#fff"/><path d="M5 4.5H18M5 7.5H18M5 10.5H14" stroke="#1f1f20" stroke-width="1"/><circle cx="21" cy="18" r="7" fill="#1f1f20" stroke="#bbb" stroke-width="1"/><text x="21" y="22" font-size="11" fill="#fff" text-anchor="middle" font-family="Liberation Sans">3</text></svg>
<div class="a" style="left:1530px;top:816px;width:1px;height:48px;background:#666"></div>
</body></html>
